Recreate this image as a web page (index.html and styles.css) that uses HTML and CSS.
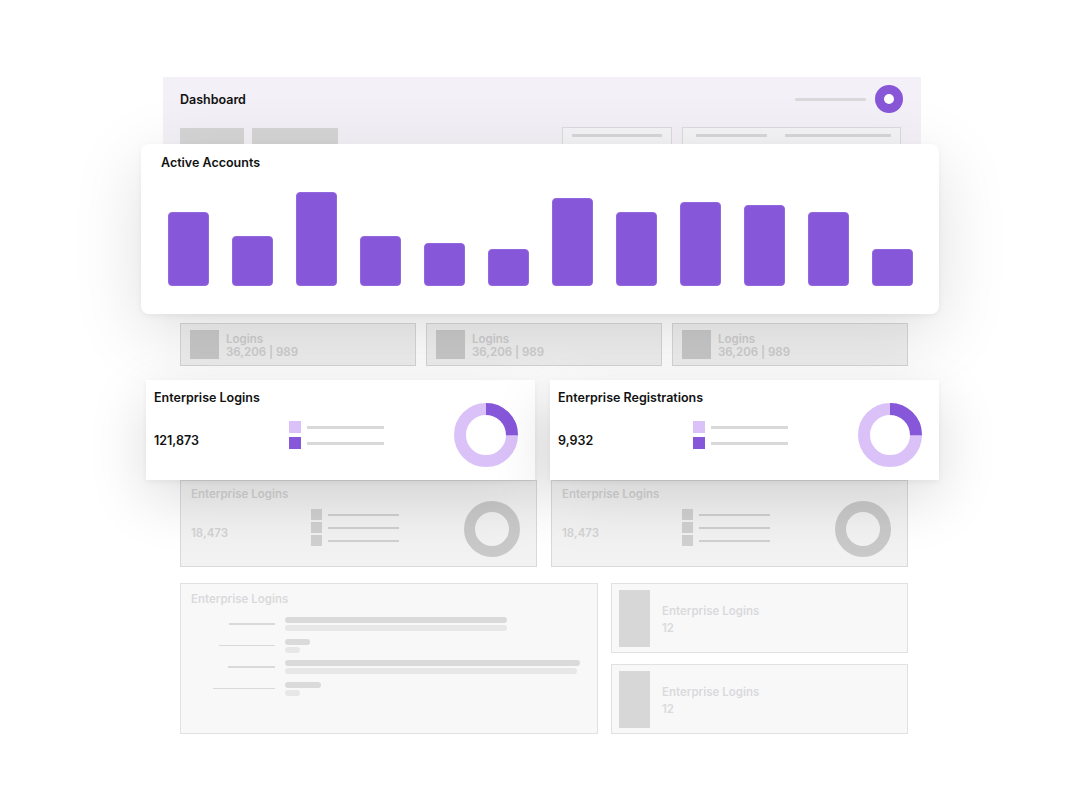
FILE: index.html
```html
<!DOCTYPE html>
<html lang="en">
<head>
<meta charset="utf-8">
<title>Dashboard</title>
<link rel="stylesheet" href="styles.css">
</head>
<body>
<div class="stage">
  <div class="dash">
    <div class="dash-header">
      <div class="dash-title">Dashboard</div>
      <div class="header-right">
        <span class="header-line"></span>
        <span class="avatar"></span>
      </div>
    </div>
    <div class="tabs">
      <div class="tab-group">
        <span class="tab tab-a"></span>
        <span class="tab tab-b"></span>
      </div>
      <div class="filter-group">
        <div class="filter filter-a"><span class="filter-line"></span></div>
        <div class="filter filter-b"><span class="filter-line fl-1"></span><span class="filter-line fl-2"></span></div>
      </div>
    </div>
    <div class="chart-slot"></div>
    <div class="rows">
      <div class="logins-row">
        <div class="login-box"><span class="login-square"></span><div class="login-text"><div>Logins</div><div>36,206 | 989</div></div></div>
        <div class="login-box"><span class="login-square"></span><div class="login-text"><div>Logins</div><div>36,206 | 989</div></div></div>
        <div class="login-box"><span class="login-square"></span><div class="login-text"><div>Logins</div><div>36,206 | 989</div></div></div>
      </div>
      <div class="ent-slot"></div>
      <div class="ghost-row">
        <div class="ghost-ent">
          <div class="ghost-title">Enterprise Logins</div>
          <div class="ghost-num">18,473</div>
          <div class="ghost-legend">
            <div class="gl-row"><span class="gl-sq"></span><span class="gl-line"></span></div>
            <div class="gl-row"><span class="gl-sq"></span><span class="gl-line"></span></div>
            <div class="gl-row"><span class="gl-sq"></span><span class="gl-line"></span></div>
          </div>
          <svg class="ghost-donut" width="56" height="56" viewBox="0 0 56 56"><circle cx="28" cy="28" r="22.5" fill="none" stroke="#c9c9c9" stroke-width="11"/></svg>
        </div>
        <div class="ghost-ent">
          <div class="ghost-title">Enterprise Logins</div>
          <div class="ghost-num">18,473</div>
          <div class="ghost-legend">
            <div class="gl-row"><span class="gl-sq"></span><span class="gl-line"></span></div>
            <div class="gl-row"><span class="gl-sq"></span><span class="gl-line"></span></div>
            <div class="gl-row"><span class="gl-sq"></span><span class="gl-line"></span></div>
          </div>
          <svg class="ghost-donut" width="56" height="56" viewBox="0 0 56 56"><circle cx="28" cy="28" r="22.5" fill="none" stroke="#c9c9c9" stroke-width="11"/></svg>
        </div>
      </div>
      <div class="bottom-row">
        <div class="list-box">
          <div class="pale-title">Enterprise Logins</div>
          <div class="list-rows">
            <div class="list-row"><span class="list-label" style="width:46px"></span><div class="list-bars"><span class="bar-dark" style="width:222px"></span><span class="bar-light" style="width:222px"></span></div></div>
            <div class="list-row"><span class="list-label" style="width:56px"></span><div class="list-bars"><span class="bar-dark" style="width:25px"></span><span class="bar-light" style="width:15px"></span></div></div>
            <div class="list-row"><span class="list-label" style="width:47px"></span><div class="list-bars"><span class="bar-dark" style="width:295px"></span><span class="bar-light" style="width:292px"></span></div></div>
            <div class="list-row"><span class="list-label" style="width:62px"></span><div class="list-bars"><span class="bar-dark" style="width:36px"></span><span class="bar-light" style="width:15px"></span></div></div>
          </div>
        </div>
        <div class="stat-col">
          <div class="stat-box"><span class="stat-rect"></span><div class="stat-text"><div>Enterprise Logins</div><div>12</div></div></div>
          <div class="stat-box"><span class="stat-rect"></span><div class="stat-text"><div>Enterprise Logins</div><div>12</div></div></div>
        </div>
      </div>
    </div>
  </div>

  <div class="active-card">
    <div class="card-title">Active Accounts</div>
    <div class="bars">
      <span class="bar" style="height:74px"></span>
      <span class="bar" style="height:50px"></span>
      <span class="bar" style="height:94px"></span>
      <span class="bar" style="height:50px"></span>
      <span class="bar" style="height:43px"></span>
      <span class="bar" style="height:37px"></span>
      <span class="bar" style="height:88px"></span>
      <span class="bar" style="height:74px"></span>
      <span class="bar" style="height:84px"></span>
      <span class="bar" style="height:81px"></span>
      <span class="bar" style="height:74px"></span>
      <span class="bar" style="height:37px"></span>
    </div>
  </div>

  <div class="ent-overlays">
    <div class="ent-card">
      <div class="card-title ent-title">Enterprise Logins</div>
      <div class="ent-num">121,873</div>
      <div class="legend">
        <div class="lg-row"><span class="lg-sq lg-light"></span><span class="lg-line"></span></div>
        <div class="lg-row"><span class="lg-sq lg-dark"></span><span class="lg-line"></span></div>
      </div>
      <svg class="donut" width="64" height="64" viewBox="0 0 64 64">
        <circle cx="32" cy="32" r="26" fill="none" stroke="#dac2f8" stroke-width="12"/>
        <circle cx="32" cy="32" r="26" fill="none" stroke="#8657d9" stroke-width="12" stroke-dasharray="40.84 200" transform="rotate(-90 32 32)"/>
      </svg>
    </div>
    <div class="ent-card">
      <div class="card-title ent-title">Enterprise Registrations</div>
      <div class="ent-num">9,932</div>
      <div class="legend">
        <div class="lg-row"><span class="lg-sq lg-light"></span><span class="lg-line"></span></div>
        <div class="lg-row"><span class="lg-sq lg-dark"></span><span class="lg-line"></span></div>
      </div>
      <svg class="donut" width="64" height="64" viewBox="0 0 64 64">
        <circle cx="32" cy="32" r="26" fill="none" stroke="#dac2f8" stroke-width="12"/>
        <circle cx="32" cy="32" r="26" fill="none" stroke="#8657d9" stroke-width="12" stroke-dasharray="40.84 200" transform="rotate(-90 32 32)"/>
      </svg>
    </div>
  </div>
</div>
</body>
</html>
```
FILE: styles.css
```css
* { box-sizing: border-box; }
html, body { margin: 0; padding: 0; background: #fff; }
body { font-family: Inter, "Noto Sans", "Liberation Sans", sans-serif; color: #111; }

.stage {
  position: relative;
  width: 1080px;
  height: 807px;
  overflow: hidden;
  background: #fff;
  padding: 77px 0 0 163px;
}

.dash {
  width: 758px;
  background: linear-gradient(to bottom, #f3f0f7 0px, #f3f0f7 50px, #f5f3f8 68px, rgba(250,250,251,0.6) 140px, rgba(255,255,255,0) 300px);
}

.dash-header {
  height: 44px;
  display: flex;
  align-items: center;
  justify-content: space-between;
  padding: 2px 18px 0 17px;
}
.dash-title { font-size: 12.5px; font-weight: 600; line-height: 16px; }
.header-right { display: flex; align-items: center; gap: 9px; margin-top: -2px; }
.header-line { width: 71px; height: 3px; border-radius: 2px; background: #d9d9d9; }
.avatar {
  width: 28px; height: 28px; border-radius: 50%;
  border: 9px solid #8757d8; background: #fff;
}

.tabs {
  margin-top: 6px;
  height: 36px;
  display: flex;
  justify-content: space-between;
  padding: 0 20px 0 17px;
}
.tab-group { display: flex; gap: 8px; padding-top: 1px; }
.tab { display: block; height: 35px; background: #d6d6d6; }
.tab-a { width: 64px; }
.tab-b { width: 86px; }
.filter-group { display: flex; gap: 10px; }
.filter {
  height: 36px;
  border: 1px solid #dcdbde;
  background: #f5f4f7;
  display: flex;
  padding: 6px 9px 0 9px;
}
.filter-a { width: 110px; }
.filter-b { width: 219px; padding-left: 13px; gap: 18px; }
.filter-line { display: block; height: 3px; background: #d7d7d7; border-radius: 1px; }
.filter-a .filter-line { flex: 1; }
.fl-1 { width: 71px; }
.fl-2 { width: 106px; }

.chart-slot { height: 160px; }

.rows { padding: 0 13px 0 17px; }

.logins-row {
  display: grid;
  grid-template-columns: repeat(3, 1fr);
  gap: 10px;
  height: 43px;
}
.login-box {
  display: flex;
  align-items: center;
  gap: 7px;
  padding: 0 9px;
  border: 1px solid #d6d6d6;
  background: #efefef;
}
.login-square { width: 29px; height: 29px; background: #c9c9c9; }
.login-text { font-size: 11.5px; font-weight: 600; line-height: 13px; color: #cdcdcd; padding-top: 2px; }

.ent-slot { height: 114px; }

.ghost-row {
  display: grid;
  grid-template-columns: 1fr 1fr;
  gap: 14px;
  height: 87px;
}
.ghost-ent {
  border: 1px solid #d9d9d9;
  background: #f2f2f2;
  display: grid;
  grid-template-columns: 120px 88px 1fr 56px;
  grid-template-rows: 14px 1fr;
  padding: 6px 16px 0 10px;
}
.ghost-title {
  grid-column: 1 / 4; grid-row: 1;
  font-size: 11.5px; font-weight: 600; line-height: 14px; color: #d2d2d2;
}
.ghost-num {
  grid-column: 1; grid-row: 2; align-self: start; margin-top: 25px;
  font-size: 11.5px; font-weight: 600; line-height: 14px; color: #d2d2d2;
}
.ghost-legend { grid-column: 2; grid-row: 2; align-self: start; margin-top: 8px; display: flex; flex-direction: column; gap: 2px; }
.gl-row { display: flex; align-items: center; gap: 6px; }
.gl-sq { width: 11px; height: 11px; background: #d0d0d0; }
.gl-line { width: 71px; height: 2px; background: #d0d0d0; }
.ghost-donut { grid-column: 4; grid-row: 1 / 3; align-self: start; margin-top: 14px; display: block; }

.bottom-row {
  margin-top: 16px;
  display: grid;
  grid-template-columns: 418px 1fr;
  gap: 13px;
  height: 151px;
}
.list-box {
  border: 1px solid #e1e1e3;
  background: #f8f8f9;
  padding: 9px 10px 8px;
}
.pale-title { font-size: 11.5px; font-weight: 600; line-height: 13px; color: #dadadc; }
.list-rows { margin-top: 11px; display: flex; flex-direction: column; gap: 7.5px; }
.list-row { display: grid; grid-template-columns: 84px 1fr; column-gap: 10px; align-items: center; }
.list-label { justify-self: end; height: 1.5px; background: #d9d9db; }
.list-bars { display: flex; flex-direction: column; gap: 2px; }
.bar-dark { display: block; height: 6px; border-radius: 3px; background: #dadadb; }
.bar-light { display: block; height: 6px; border-radius: 3px; background: #e7e7e8; }

.stat-col { display: flex; flex-direction: column; gap: 11px; }
.stat-box {
  height: 70px;
  border: 1px solid #e1e1e3;
  background: #f8f8f9;
  display: flex;
  align-items: center;
  gap: 12px;
  padding: 0 7px;
}
.stat-rect { width: 31px; height: 57px; background: #d7d7d8; }
.stat-text { font-size: 11.5px; font-weight: 600; line-height: 17px; color: #dadadc; padding-top: 4px; }

/* floating cards */
.active-card {
  position: absolute;
  left: 141px; top: 144px;
  width: 798px; height: 170px;
  background: #fff;
  border-radius: 8px;
  box-shadow: 0 18px 70px rgba(0,0,0,0.13), 0 2px 6px rgba(0,0,0,0.05);
  padding: 11px 26px 28px 20px;
  display: flex;
  flex-direction: column;
}
.card-title { font-size: 12.5px; font-weight: 600; line-height: 16px; color: #111; }
.bars {
  flex: 1;
  display: flex;
  align-items: flex-end;
  justify-content: space-between;
  padding-left: 7px;
}
.bar {
  display: block;
  width: 41px;
  background: #8657d9;
  border: 1px solid #9268e0;
  border-radius: 4px;
}

.ent-overlays {
  position: absolute;
  left: 146px; top: 380px;
  display: flex;
  gap: 15px;
}
.ent-card {
  width: 389px; height: 100px;
  background: #fff;
  box-shadow: 0 18px 60px rgba(0,0,0,0.14), 0 2px 6px rgba(0,0,0,0.05);
  display: grid;
  grid-template-columns: 135px auto 1fr 64px;
  grid-template-rows: 24px 1fr;
  padding: 10px 17px 14px 8px;
}
.ent-title { grid-column: 1 / 4; grid-row: 1; }
.ent-num { grid-column: 1; grid-row: 2; align-self: center; font-size: 12.5px; font-weight: 600; line-height: 16px; }
.legend { grid-column: 2; grid-row: 2; align-self: start; margin-top: 7px; display: flex; flex-direction: column; gap: 4px; }
.lg-row { display: flex; align-items: center; gap: 6px; }
.lg-sq { width: 12px; height: 12px; }
.lg-light { background: #dac2f8; }
.lg-dark { background: #8657d9; }
.lg-line { width: 77px; height: 3px; background: #d9d9d9; }
.donut { grid-column: 4; grid-row: 1 / 3; align-self: start; margin-top: 13px; display: block; }
```
